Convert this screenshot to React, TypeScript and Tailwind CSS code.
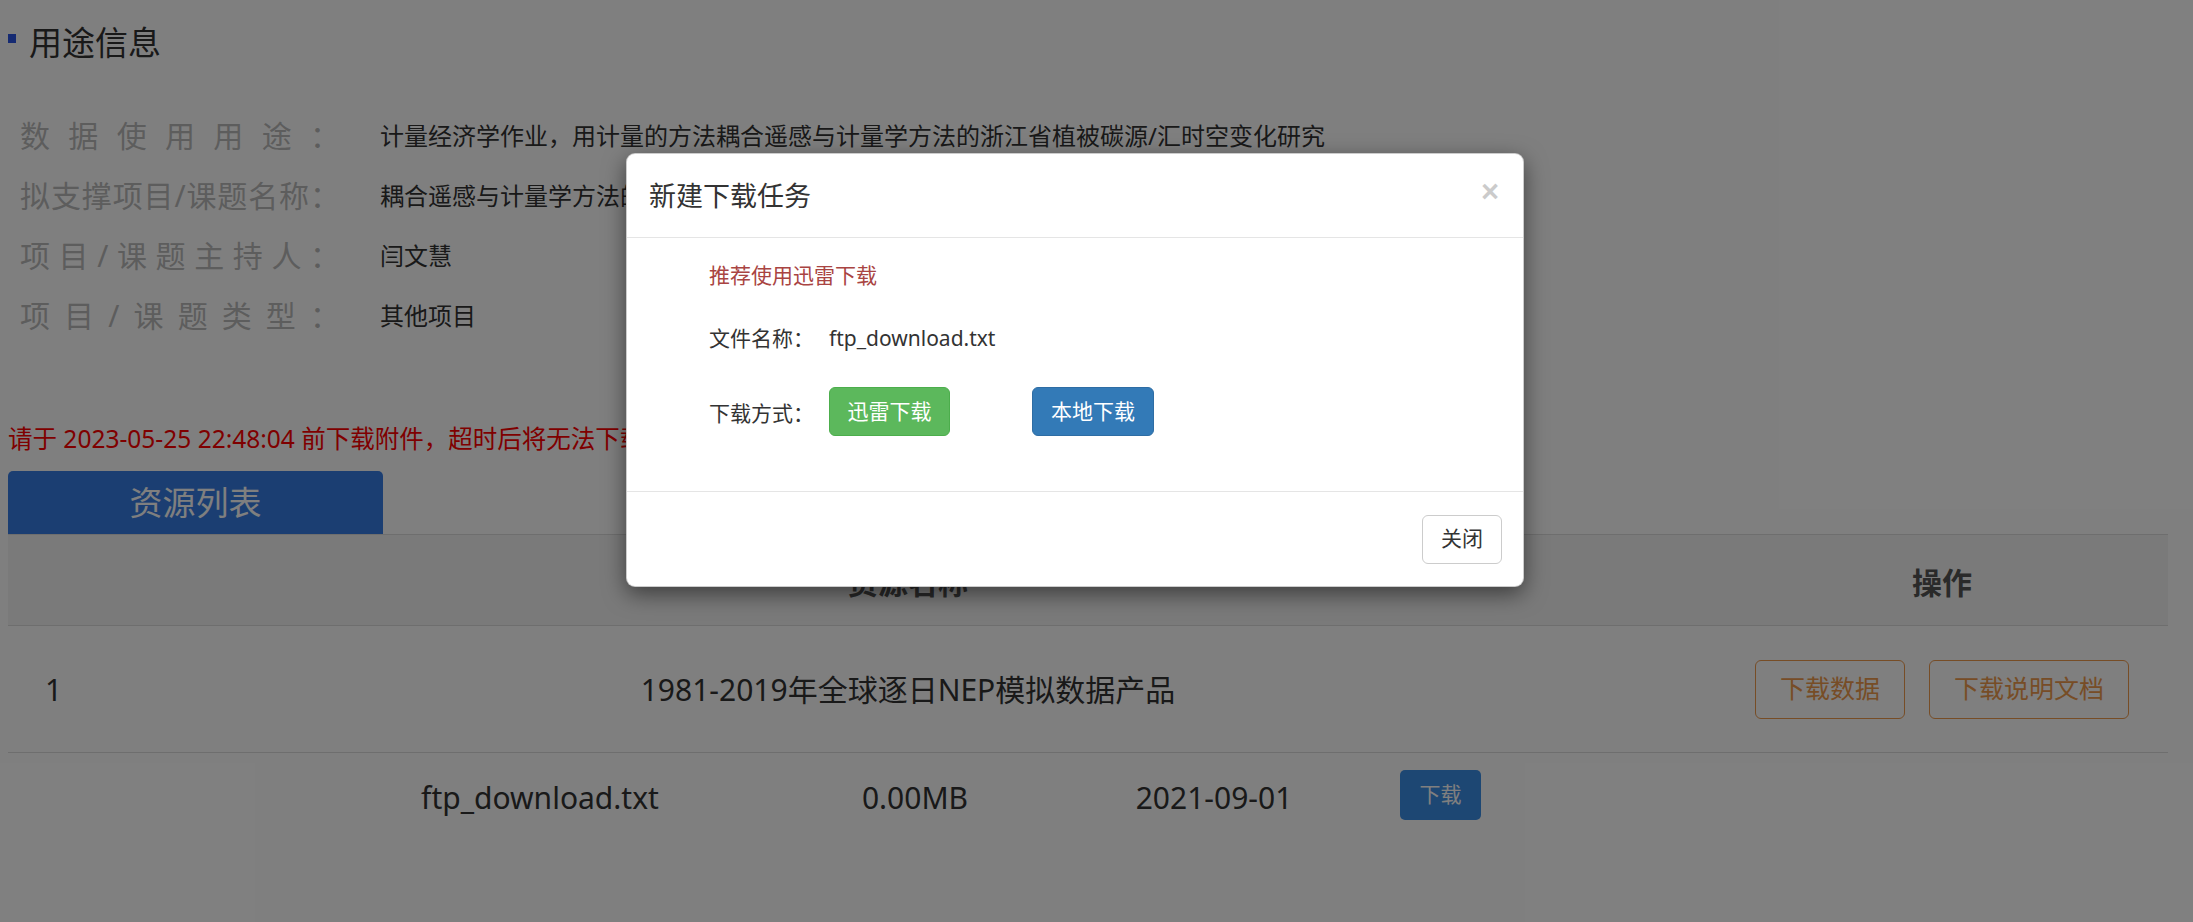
const usageRows = [
  { label: "数据使用用途：", value: "计量经济学作业，用计量的方法耦合遥感与计量学方法的浙江省植被碳源/汇时空变化研究" },
  { label: "拟支撑项目/课题名称：", value: "耦合遥感与计量学方法的浙江省植被碳源/汇时空变化研究" },
  { label: "项目/课题主持人：", value: "闫文慧" },
  { label: "项目/课题类型：", value: "其他项目" },
];

const files = [{ name: "ftp_download.txt", size: "0.00MB", date: "2021-09-01" }];

const fontStack = { fontFamily: '"Noto Sans", "Noto Sans CJK SC", sans-serif' };

function DownloadModal() {
  return (
    <div className="absolute left-[626px] top-[153px] w-[898px] overflow-hidden rounded-[9px] border border-black/20 bg-white shadow-[0_7px_22px_rgba(0,0,0,0.5)]">
      {/* 标题栏 */}
      <div className="flex h-[84px] items-center justify-between border-b border-[#e5e5e5] px-[22px]">
        <h4 className="text-[27px] leading-[38px] text-[#333]">新建下载任务</h4>
        <button className="-mt-[8px] mr-[2px] text-[31px] font-bold leading-none text-black opacity-20" style={{ fontFamily: '"Liberation Sans", sans-serif' }}>
          ×
        </button>
      </div>

      {/* 内容 */}
      <div className="flex h-[253px] flex-col pl-[82px] pt-[22px] text-[21px] text-[#333]">
        <div className="h-[30px] leading-[30px] text-[#a94442]">推荐使用迅雷下载</div>
        <div className="mt-[33px] flex h-[30px] items-center leading-[30px]">
          <span className="w-[120px]">文件名称：</span>
          <span>ftp_download.txt</span>
        </div>
        <div className="mt-[34px] flex h-[49px] items-center">
          <span className="w-[120px] pt-[4px]">下载方式：</span>
          <button className="flex h-[49px] w-[121px] items-center justify-center rounded-[6px] border border-[#4cae4c] bg-[#5cb85c] text-white">
            迅雷下载
          </button>
          <button className="ml-[82px] flex h-[49px] w-[122px] items-center justify-center rounded-[6px] border border-[#2e6da4] bg-[#337ab7] text-white">
            本地下载
          </button>
        </div>
      </div>

      {/* 底部 */}
      <div className="flex h-[95px] items-center justify-end border-t border-[#e5e5e5] pr-[21px]">
        <button className="flex h-[49px] w-[80px] items-center justify-center rounded-[6px] border border-[#ccc] bg-white text-[21px] text-[#333]">
          关闭
        </button>
      </div>
    </div>
  );
}

export default function App() {
  return (
    <div className="relative h-[922px] w-full overflow-hidden bg-white" style={fontStack}>
      <div className="pt-[23px]">
        {/* 用途信息 */}
        <h3 className="flex h-[40px] items-center">
          <span className="mb-[10px] ml-[8px] h-[9px] w-[8px] bg-[#2a55e5]" />
          <span className="ml-[13px] text-[33px] leading-[40px] text-[#333]">用途信息</span>
        </h3>

        <div className="mt-[43px]">
          {usageRows.map((row) => (
            <div key={row.label} className="flex h-[60px] items-center">
              <span className="ml-[20px] inline-block w-[320px] whitespace-nowrap text-justify text-[30px] leading-[40px] text-[#bbb] [text-align-last:justify]">
                {row.label}
              </span>
              <span className="ml-[40px] text-[24px] leading-[34px] text-[#333]">{row.value}</span>
            </div>
          ))}
        </div>

        <p className="mt-[73px] h-[40px] pl-[8px] text-[24.5px] leading-[40px] text-[#f00]">
          请于 2023-05-25 22:48:04 前下载附件，超时后将无法下载！
        </p>

        {/* 资源列表 */}
        <div className="mt-[12px] ml-[8px] flex h-[63px] w-[375px] items-center justify-center rounded-t-[5px] bg-[#367ce4] text-[33px] text-white">
          资源列表
        </div>

        <div className="ml-[8px] w-[2160px] border-t border-[#ddd]">
          <div className="flex h-[91px] items-center border-b border-[#ddd] bg-[#f5f5f5] pt-[4px] text-[30px] font-bold text-[#555]">
            <div className="w-[92px]" />
            <div className="flex-1 text-center">资源名称</div>
            <div className="w-[452px] text-center">操作</div>
          </div>

          <div className="flex h-[127px] items-center border-b border-[#ddd] text-[30px] text-[#333]">
            <div className="w-[92px] pl-[37px]">1</div>
            <div className="flex-1 text-center">1981-2019年全球逐日NEP模拟数据产品</div>
            <div className="flex w-[452px] items-center justify-center gap-[24px]">
              <button className="h-[59px] rounded-[6px] border border-[#ee9a4d] px-[24px] text-[25px] text-[#ee9a4d]">下载数据</button>
              <button className="h-[59px] rounded-[6px] border border-[#ee9a4d] px-[24px] text-[25px] text-[#ee9a4d]">下载说明文档</button>
            </div>
          </div>

          {files.map((f) => (
            <div key={f.name} className="flex h-[84px] items-center text-[30px] text-[#333]">
              <div className="w-[332px]" />
              <div className="w-[400px] pt-[4px] text-center">{f.name}</div>
              <div className="w-[350px] pt-[4px] text-center">{f.size}</div>
              <div className="w-[248px] pt-[4px] text-center">{f.date}</div>
              <button className="ml-[62px] h-[50px] w-[81px] rounded-[5px] bg-[#3a8ee6] text-[21px] text-white">下载</button>
            </div>
          ))}
        </div>
      </div>

      {/* 遮罩 */}
      <div className="absolute inset-0 bg-black/50" />
      <DownloadModal />
    </div>
  );
}
